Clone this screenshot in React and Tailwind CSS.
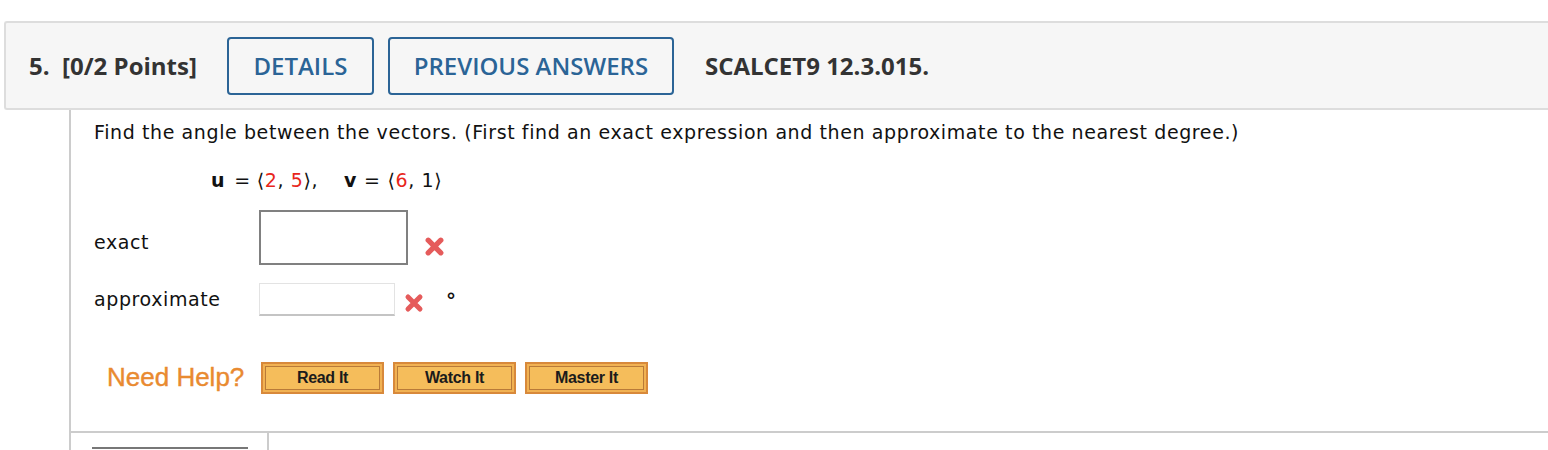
import React from "react";

function RedX({ className }) {
  return (
    <svg viewBox="0 0 20 20" className={className}>
      <path d="M4 4 L16 16 M16 4 L4 16" stroke="#e55b5b" strokeWidth="5" strokeLinecap="round" />
    </svg>
  );
}

function HelpButton({ label, className }) {
  return (
    <button className={"h-[32px] w-[123px] border-2 border-[#d8893b] bg-[#f1b253] p-[2px] " + className}>
      <span className="flex h-full w-full items-center justify-center border border-[#b97a38] bg-[#f5bd5b] text-[16px] font-bold tracking-[-0.3px] text-[#1b1b1b] [font-family:'Liberation_Sans',Arial,sans-serif]">
        {label}
      </span>
    </button>
  );
}

export default function App() {
  return (
    <div className="min-h-screen overflow-hidden bg-white pt-[21px]">
      {/* question header */}
      <div className="ml-[4px] flex h-[89px] items-center rounded-l-[3px] border-2 border-r-0 border-[#dddddd] bg-[#f6f6f6] pl-[23px] text-[24px] font-bold text-[#333] [font-family:'Open_Sans',sans-serif]">
        <span>5.&nbsp; [0/2 Points]</span>
        <button className="ml-[30px] h-[58px] w-[147px] rounded-[4px] border-2 border-[#2b6496] bg-transparent text-[24px] font-semibold text-[#2b6496]">
          DETAILS
        </button>
        <button className="ml-[14px] h-[58px] w-[286px] rounded-[4px] border-2 border-[#2b6496] bg-transparent text-[24px] font-semibold text-[#2b6496]">
          PREVIOUS ANSWERS
        </button>
        <span className="ml-[31px]">SCALCET9 12.3.015.</span>
      </div>

      {/* question body */}
      <div className="ml-[69px] border-b-2 border-l-2 border-[#cccccc] pb-[34px] pl-[23px] text-[19px] tracking-[0.6px] text-[#111] [font-family:'DejaVu_Sans',Verdana,sans-serif]">
        <p className="pt-[11px] leading-[22px]">
          Find the angle between the vectors. (First find an exact expression and then approximate to the nearest degree.)
        </p>
        <p className="mt-[26px] flex pl-[117px] leading-[22px]">
          <b>u</b>
          <span className="ml-[9px]">=</span>
          <span className="ml-[6px]">⟨<span className="text-[#e8261b]">2</span>, <span className="text-[#e8261b]">5</span>⟩,</span>
          <b className="ml-[26px]">v</b>
          <span className="ml-[7px]">=</span>
          <span className="ml-[7px]">⟨<span className="text-[#e8261b]">6</span>, 1⟩</span>
        </p>

        <div className="mt-[19px] flex items-center">
          <span className="w-[165px] pt-[9px]">exact</span>
          <input className="h-[55px] w-[149px] border-2 border-[#808080] bg-white outline-none" />
          <RedX className="ml-[16px] mt-[18px] h-[21px] w-[21px]" />
        </div>

        <div className="mt-[18px] flex items-center">
          <span className="w-[165px]">approximate</span>
          <input className="h-[33px] w-[136px] border border-[#e3e3e3] border-b-2 border-b-[#c4c4c4] bg-white outline-none" />
          <RedX className="ml-[9px] mt-[6px] h-[20px] w-[20px]" />
          <span className="ml-[22px] mt-[1px] text-[20px] font-bold">°</span>
        </div>

        <div className="mt-[42px] flex items-center pl-[13px]">
          <span className="w-[154px] text-[26px] tracking-normal text-[#e98a30] [font-family:'Liberation_Sans',Arial,sans-serif] [-webkit-text-stroke:0.4px_#e98a30]">
            Need Help?
          </span>
          <HelpButton label="Read It" />
          <HelpButton label="Watch It" className="ml-[9px]" />
          <HelpButton label="Master It" className="ml-[9px]" />
        </div>
      </div>

      {/* next row */}
      <div className="ml-[69px] flex h-[40px] border-l-2 border-[#cccccc]">
        <div className="w-[198px] border-r-2 border-[#cccccc] pl-[21px] pt-[14px]">
          <div className="h-[30px] w-[156px] border-t-2 border-[#777]" />
        </div>
      </div>
    </div>
  );
}
